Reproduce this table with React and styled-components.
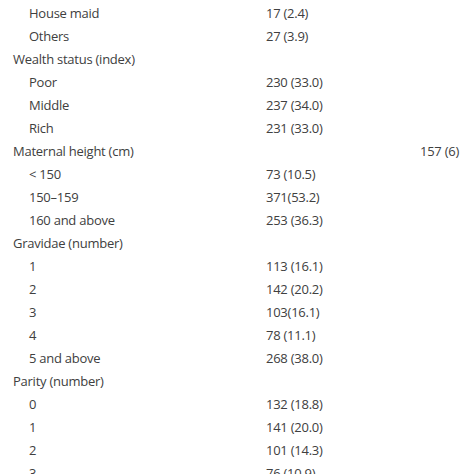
import styled, { createGlobalStyle } from "styled-components";

const GlobalStyle = createGlobalStyle`
  html, body {
    margin: 0;
    padding: 0;
    background: #fff;
  }
`;

const rows = [
  { label: "House maid", value: "17 (2.4)", sub: true },
  { label: "Others", value: "27 (3.9)", sub: true },
  { label: "Wealth status (index)" },
  { label: "Poor", value: "230 (33.0)", sub: true },
  { label: "Middle", value: "237 (34.0)", sub: true },
  { label: "Rich", value: "231 (33.0)", sub: true },
  { label: "Maternal height (cm)", extra: "157 (6)" },
  { label: "< 150", value: "73 (10.5)", sub: true },
  { label: "150–159", value: "371(53.2)", sub: true },
  { label: "160 and above", value: "253 (36.3)", sub: true },
  { label: "Gravidae (number)" },
  { label: "1", value: "113 (16.1)", sub: true },
  { label: "2", value: "142 (20.2)", sub: true },
  { label: "3", value: "103(16.1)", sub: true },
  { label: "4", value: "78 (11.1)", sub: true },
  { label: "5 and above", value: "268 (38.0)", sub: true },
  { label: "Parity (number)" },
  { label: "0", value: "132 (18.8)", sub: true },
  { label: "1", value: "141 (20.0)", sub: true },
  { label: "2", value: "101 (14.3)", sub: true },
  { label: "3", value: "76 (10.9)", sub: true },
];

function App() {
  return (
    <>
      <GlobalStyle />
      <StyledTable>
        {rows.map((r, i) => (
          <StyledRow key={i}>
            <StyledLabel $sub={r.sub}>{r.label}</StyledLabel>
            <StyledCell>{r.value}</StyledCell>
            <StyledCell>{r.extra}</StyledCell>
          </StyledRow>
        ))}
      </StyledTable>
    </>
  );
}

export default App;

const StyledTable = styled.div`
  width: 474px;
  height: 474px;
  overflow: hidden;
  padding-top: 1px;
  box-sizing: border-box;
  display: flex;
  flex-direction: column;
  font-family: "Open Sans", "Noto Sans", sans-serif;
  font-size: 13px;
  color: #404040;
`;

const StyledRow = styled.div`
  display: grid;
  grid-template-columns: 266px 154px 1fr;
  align-items: center;
  height: 23px;
  flex-shrink: 0;
  white-space: nowrap;
`;

const StyledLabel = styled.div`
  padding-left: ${(p) => (p.$sub ? "29px" : "13px")};
  letter-spacing: -0.25px;
`;

const StyledCell = styled.div`
  letter-spacing: -0.25px;
`;
